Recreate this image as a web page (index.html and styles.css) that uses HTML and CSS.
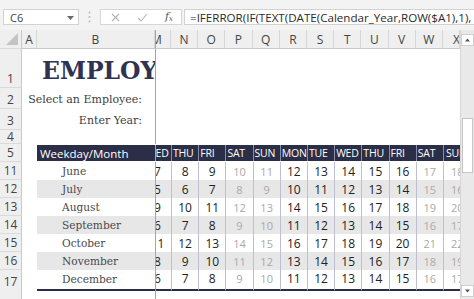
FILE: index.html
```html
<!DOCTYPE html>
<html>
<head>
<meta charset="utf-8">
<link rel="stylesheet" href="styles.css">
</head>
<body>
<div class="app">
  <div class="fbar">
    <div class="namebox"><span>C6</span><svg class="caret" width="7" height="4" viewBox="0 0 7 4"><path d="M0 0H7L3.5 4Z" fill="#6b6b6b"/></svg></div>
    <svg class="dots" width="3" height="12" viewBox="0 0 3 12"><circle cx="1.5" cy="1.5" r="1" fill="#b8b8b8"/><circle cx="1.5" cy="6" r="1" fill="#b8b8b8"/><circle cx="1.5" cy="10.5" r="1" fill="#b8b8b8"/></svg>
    <div class="fxbox">
      <svg width="9" height="9" viewBox="0 0 9 9"><path d="M1 1L8 8M8 1L1 8" stroke="#b3b3b3" stroke-width="1.1" fill="none"/></svg>
      <svg width="11" height="9" viewBox="0 0 11 9"><path d="M1 5L4 8L10 1" stroke="#b3b3b3" stroke-width="1.1" fill="none"/></svg>
      <span class="fx">f<sub>x</sub></span>
    </div>
    <div class="formula"><span>=IFERROR(IF(TEXT(DATE(Calendar_Year,ROW($A1),1),</span><svg width="7" height="5" viewBox="0 0 7 5"><path d="M0.5 0.8L3.5 3.8L6.5 0.8" stroke="#666" stroke-width="1.1" fill="none"/></svg></div>
  </div>
  <div class="sheet">
    <div class="grid">
      <div class="row colhead">
        <div class="rh corner"><svg width="12" height="12" viewBox="0 0 12 12"><path d="M12 0V12H0Z" fill="#c4c4c4"/></svg></div>
        <div class="ch">A</div>
        <div class="ch">B</div>
        <div class="ch m"><span class="in">M</span></div>
        <div class="ch">N</div><div class="ch">O</div><div class="ch">P</div><div class="ch">Q</div><div class="ch">R</div><div class="ch">S</div><div class="ch">T</div><div class="ch">U</div><div class="ch">V</div><div class="ch">W</div>
        <div class="ch x"><span class="in">X</span></div>
      </div>
      <div class="row r1"><div class="rh">1</div><div class="a"></div><div class="b title">EMPLOY</div><div class="rest"></div></div>
      <div class="row r2"><div class="rh">2</div><div class="lbl">Select an Employee:</div><div class="rest"></div></div>
      <div class="row r3"><div class="rh">3</div><div class="lbl">Enter Year:</div><div class="rest"></div></div>
      <div class="row r4"><div class="rh">4</div><div class="a"></div><div class="b"></div><div class="rest"></div></div>
      <div class="row r5">
        <div class="rh">5</div><div class="a"></div>
        <div class="hd first">Weekday/Month</div>
        <div class="hd m"><span class="in">WED</span></div>
        <div class="hd d">THU</div><div class="hd d">FRI</div><div class="hd d">SAT</div><div class="hd d">SUN</div><div class="hd d">MON</div><div class="hd d">TUE</div><div class="hd d">WED</div><div class="hd d">THU</div><div class="hd d">FRI</div><div class="hd d">SAT</div>
        <div class="hd d x"><span class="in">SUN</span></div>
      </div>
      <div class="row dr">
        <div class="rh">11</div><div class="a"></div><div class="mon">June</div>
        <div class="c m"><span class="in">7</span></div><div class="c">8</div><div class="c">9</div><div class="c we">10</div><div class="c we">11</div><div class="c">12</div><div class="c">13</div><div class="c">14</div><div class="c">15</div><div class="c">16</div><div class="c we">17</div><div class="c we x"><span class="in">18</span></div>
      </div>
      <div class="row dr alt">
        <div class="rh">12</div><div class="a"></div><div class="mon">July</div>
        <div class="c m"><span class="in">5</span></div><div class="c">6</div><div class="c">7</div><div class="c we">8</div><div class="c we">9</div><div class="c">10</div><div class="c">11</div><div class="c">12</div><div class="c">13</div><div class="c">14</div><div class="c we">15</div><div class="c we x"><span class="in">16</span></div>
      </div>
      <div class="row dr">
        <div class="rh">13</div><div class="a"></div><div class="mon">August</div>
        <div class="c m"><span class="in">9</span></div><div class="c">10</div><div class="c">11</div><div class="c we">12</div><div class="c we">13</div><div class="c">14</div><div class="c">15</div><div class="c">16</div><div class="c">17</div><div class="c">18</div><div class="c we">19</div><div class="c we x"><span class="in">20</span></div>
      </div>
      <div class="row dr alt">
        <div class="rh">14</div><div class="a"></div><div class="mon">September</div>
        <div class="c m"><span class="in">6</span></div><div class="c">7</div><div class="c">8</div><div class="c we">9</div><div class="c we">10</div><div class="c">11</div><div class="c">12</div><div class="c">13</div><div class="c">14</div><div class="c">15</div><div class="c we">16</div><div class="c we x"><span class="in">17</span></div>
      </div>
      <div class="row dr">
        <div class="rh">15</div><div class="a"></div><div class="mon">October</div>
        <div class="c m"><span class="in">11</span></div><div class="c">12</div><div class="c">13</div><div class="c we">14</div><div class="c we">15</div><div class="c">16</div><div class="c">17</div><div class="c">18</div><div class="c">19</div><div class="c">20</div><div class="c we">21</div><div class="c we x"><span class="in">22</span></div>
      </div>
      <div class="row dr alt">
        <div class="rh">16</div><div class="a"></div><div class="mon">November</div>
        <div class="c m"><span class="in">8</span></div><div class="c">9</div><div class="c">10</div><div class="c we">11</div><div class="c we">12</div><div class="c">13</div><div class="c">14</div><div class="c">15</div><div class="c">16</div><div class="c">17</div><div class="c we">18</div><div class="c we x"><span class="in">19</span></div>
      </div>
      <div class="row dr last">
        <div class="rh">17</div><div class="a"></div><div class="mon">December</div>
        <div class="c m"><span class="in">6</span></div><div class="c">7</div><div class="c">8</div><div class="c we">9</div><div class="c we">10</div><div class="c">11</div><div class="c">12</div><div class="c">13</div><div class="c">14</div><div class="c">15</div><div class="c we">16</div><div class="c we x"><span class="in">17</span></div>
      </div>
      <div class="row r18"><div class="rh"></div><div class="a"></div><div class="b"></div><div class="rest"></div></div>
    </div>
    <div class="vscroll">
      <div class="up"><svg width="7" height="4" viewBox="0 0 7 4"><path d="M0 4H7L3.5 0Z" fill="#555"/></svg></div>
      <div class="track"><div class="thumb"></div></div>
      <div class="down"><svg width="7" height="4" viewBox="0 0 7 4"><path d="M0 0H7L3.5 4Z" fill="#555"/></svg></div>
    </div>
  </div>
</div>
</body>
</html>
```

FILE: styles.css
```css
* { box-sizing: border-box; margin: 0; padding: 0; }
html, body { width: 474px; height: 299px; overflow: hidden; background: #ffffff; }
body { font-family: "Open Sans", "Noto Sans", sans-serif; color: #333; }

.app { display: flex; flex-direction: column; height: 299px; }

/* formula bar */
.fbar { height: 30px; flex: none; background: #f3f3f3; display: flex; align-items: flex-start; padding: 9px 0 0 3px; }
.namebox { width: 76px; height: 16px; background: #fff; border: 1px solid #d2d2d2; display: flex; align-items: center; justify-content: space-between; padding: 0 4px 0 6px; font-size: 11px; color: #444; }
.caret { margin-top: 1px; }
.dots { margin: 2px 9px 0 9px; }
.fxbox { width: 82px; height: 16px; background: #fff; border: 1px solid #d6d6d6; display: flex; align-items: center; padding: 0 0 0 10px; gap: 17px; }
.fx { font-family: "DejaVu Serif", serif; font-style: italic; font-size: 11px; color: #555; line-height: 1; }
.fx sub { font-size: 7px; vertical-align: -1px; }
.formula { margin-left: 2px; flex: 1; height: 16px; background: #fff; border: 1px solid #d2d2d2; border-right: none; display: flex; align-items: center; justify-content: space-between; padding: 0 6px 0 5px; font-size: 11.6px; color: #2b2b2b; white-space: nowrap; overflow: hidden; }

/* sheet */
.sheet { flex: 1; display: flex; overflow: hidden; }
.grid { width: 460px; flex: none; display: flex; flex-direction: column; overflow: hidden; }
.row { display: grid; grid-template-columns: 22px 15px 118px 16px repeat(10, 27.2px) 17px; flex: none; }

.rh { background: #efefef; border-right: 1px solid #c9c9c9; border-bottom: 1px solid #dadada; display: flex; align-items: flex-end; justify-content: center; padding-bottom: 1px; font-size: 12px; line-height: 15px; color: #444; overflow: hidden; }
.rh.corner { align-items: flex-end; justify-content: flex-end; padding: 0 3px 3px 0; }
.r4 .rh { align-items: center; padding-bottom: 0; line-height: 12px; overflow: visible; }

.colhead { height: 19px; background: #efefef; }
.ch { border-right: 1px solid #d6d6d6; border-bottom: 1px solid #c9c9c9; display: flex; align-items: center; justify-content: center; font-size: 12px; color: #444; background: #efefef; }
.ch.m { border-left: 1px solid #a5a5a5; }

.m { border-left: 1px solid #a5a5a5; overflow: hidden; justify-content: flex-end; display: flex; }
.m .in { flex: none; width: 27px; text-align: center; }
.x { overflow: hidden; justify-content: flex-start; display: flex; }
.x .in { flex: none; width: 27px; text-align: center; }
.hd.m .in, .hd.x .in { text-align: left; padding-left: 2px; }

.rest { grid-column: 4 / -1; border-left: 1px solid #a5a5a5; }

.r1 { height: 39px; }
.r2, .r3 { height: 21px; }
.r4 { height: 14px; }
.r5 { height: 18px; }
.dr { height: 18px; }
.r18 { height: 20px; }

.title { font-family: "DejaVu Serif", serif; font-weight: bold; font-size: 23.5px; color: #2e3352; letter-spacing: 0; padding: 11px 0 0 5px; white-space: nowrap; overflow: hidden; line-height: 1; }

.lbl { grid-column: 2 / 4; font-family: "DejaVu Serif", serif; font-size: 11px; color: #404040; padding-right: 13px; white-space: nowrap; display: flex; align-items: center; justify-content: flex-end; padding-top: 2px; }

.hd { background: #2b2e47; color: #fff; font-size: 10.5px; letter-spacing: -0.2px; display: flex; align-items: center; margin-top: 1px; margin-bottom: 1px; white-space: nowrap; overflow: hidden; }
.hd.first { padding-left: 3px; font-size: 11.5px; letter-spacing: 0; }
.hd.d { border-left: 1px solid #8a8ca6; padding-left: 1px; }
.hd.d.x { padding-left: 0; }

.mon { font-family: "DejaVu Serif", serif; font-size: 10.6px; color: #4a4a4a; padding-left: 25px; display: flex; align-items: center; white-space: nowrap; }
.c { display: flex; align-items: center; justify-content: center; font-size: 12px; color: #222; border-left: 1px solid #bdbdd4; }
.c.m { border-left: 1px solid #a5a5a5; justify-content: flex-end; }
.c.x { justify-content: flex-start; }
.c.we { color: #a9a9a9; font-size: 11px; }
.alt .mon, .alt .c { background: #e7e7e7; }
.last .mon, .last .c { border-bottom: 2px solid #2b2e47; }
.last { height: 20px; }
.last .c, .last .mon { padding-bottom: 2px; }

/* scrollbar */
.vscroll { width: 14px; flex: none; background: #e9e9e9; border-left: 1px solid #d6d6d6; display: flex; flex-direction: column; }
.up { height: 19px; display: flex; align-items: center; justify-content: center; }
.up svg, .down svg { background: #fff; padding: 3px 3px; box-sizing: content-box; border: 1px solid #cfcfcf; }
.track { flex: 1; padding: 69px 1px 0 1px; }
.thumb { height: 55px; background: #fff; border: 1px solid #c6c6c6; }
.down { height: 14px; display: flex; align-items: flex-start; justify-content: center; }
```
